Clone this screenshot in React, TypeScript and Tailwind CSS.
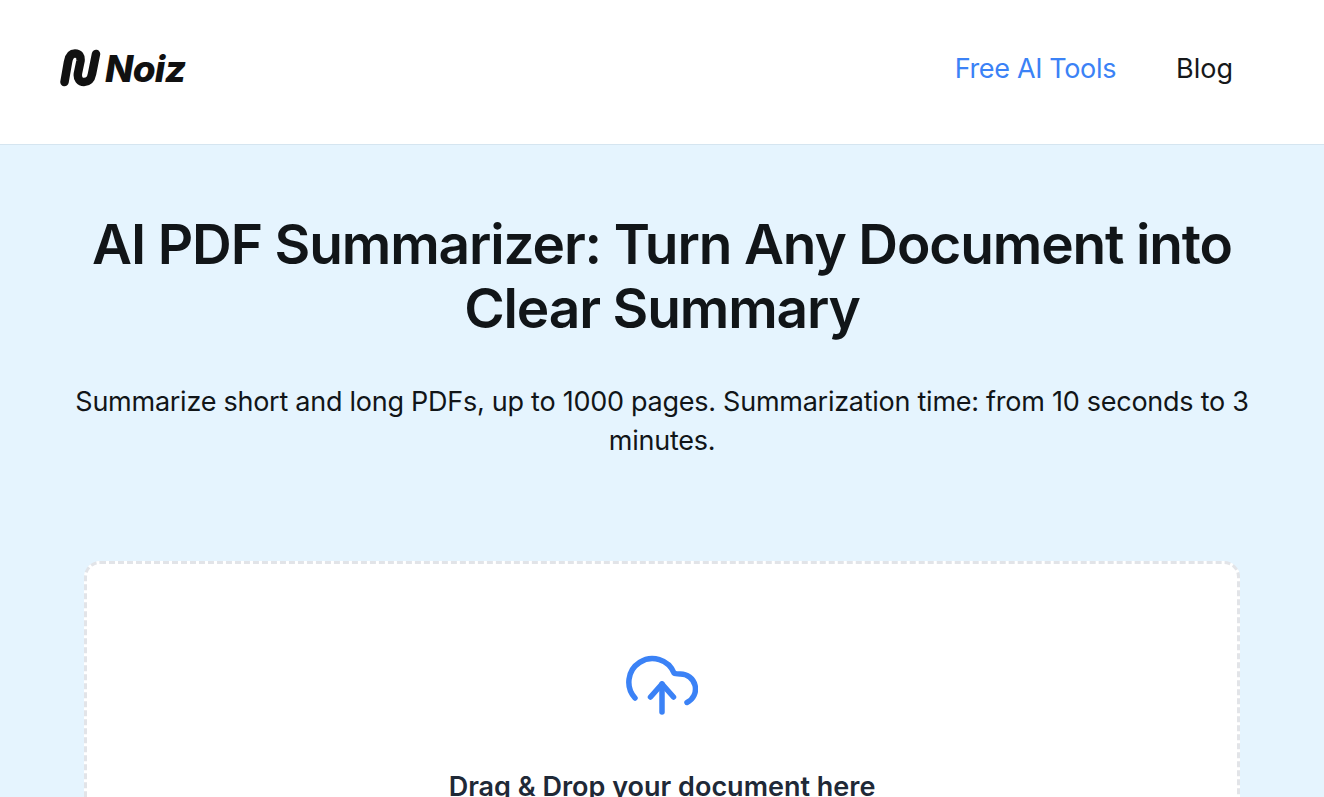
import React from "react";

const sans = "font-['Inter','Liberation_Sans',sans-serif]";

export default function App() {
  return (
    <div className={`h-[797px] overflow-hidden bg-[#e5f4fe] ${sans}`}>
      <header className="flex h-[145px] items-center justify-between border-b border-[#d5e5f0] bg-white pb-[8px] pl-[60px] pr-[91px]">
        <div className="flex items-center gap-[3px]">
          <svg width="42" height="38" viewBox="0 0 42 38" fill="none">
            <path d="M4.500 33 L8 13 C9 7 11.500 4.500 15 4.500 C19 4.500 21 7 20.500 12 L18 24 C17 30 20 33 24 33 C29 33 31 30 32 25 L36 5" stroke="#111" strokeWidth="8.500" strokeLinecap="round" strokeLinejoin="round" />
          </svg>
          <span className="text-[37px] leading-none font-extrabold italic tracking-[-0.7px] text-[#111]">Noiz</span>
        </div>
        <nav className="flex items-center gap-[60px] text-[27px] leading-none">
          <a className="tracking-[-0.35px] text-[#3b82f6]">Free AI Tools</a>
          <a className="text-[#16181a]">Blog</a>
        </nav>
      </header>
      <main className="px-[84px] pt-[67px]">
        <h1 className="-mx-[20px] text-center text-[55px] leading-[64px] font-semibold tracking-[-1.13px] text-[#111518]">
          AI PDF Summarizer: Turn Any Document into Clear Summary
        </h1>
        <p className="-mx-[20px] mt-[42px] text-center text-[27px] leading-[39px] tracking-[-0.26px] text-[#111518]">
          Summarize short and long PDFs, up to 1000 pages. Summarization time: from 10 seconds to 3 minutes.
        </p>
        <section className="mt-[101px] flex h-[400px] flex-col items-center rounded-[16px] border-[3px] border-dashed border-[#e2e4e8] bg-white pt-[91px]">
          <svg width="72" height="60" viewBox="0 0 72 60" fill="none" stroke="#3b82f6" strokeWidth="5.500" strokeLinecap="round" strokeLinejoin="round">
            <path d="M9 43 A23.500 23.500 0 1 1 48 18 C49.500 19 52 19 54 19 A15 15 0 0 1 61 47.500" />
            <path d="M36 57 V29" />
            <path d="M24.500 42 L36 29 L47.500 42" />
          </svg>
          <p className="mt-[56px] text-[27px] leading-[32px] font-semibold text-[#1f2937]">Drag &amp; Drop your document here</p>
        </section>
      </main>
    </div>
  );
}
